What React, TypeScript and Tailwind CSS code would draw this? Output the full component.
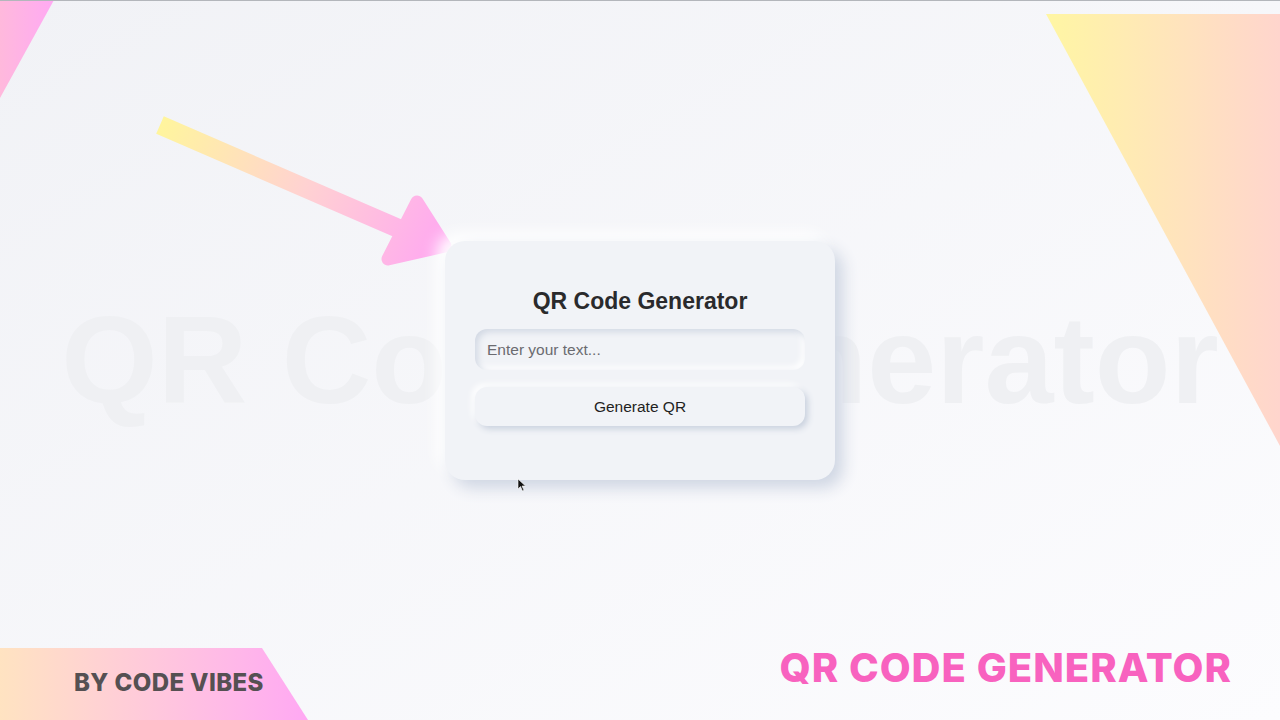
import { useState } from 'react'

// decorative arrow pointing at the card
function Arrow() {
  return (
    <svg width="330" height="180" viewBox="0 0 330 180" className="absolute left-[140px] top-[100px]">
      <defs>
        <linearGradient id="arrowGrad" gradientUnits="userSpaceOnUse" x1="20" y1="24" x2="312" y2="147">
          <stop offset="0" stopColor="#fff59d" />
          <stop offset="0.5" stopColor="#ffd2d2" />
          <stop offset="1" stopColor="#ffa6f2" />
        </linearGradient>
      </defs>
      <line x1="20" y1="24" x2="262" y2="129" stroke="url(#arrowGrad)" strokeWidth="19" />
      <polygon
        points="277,101 305,145 248,158"
        fill="url(#arrowGrad)"
        stroke="url(#arrowGrad)"
        strokeWidth="13"
        strokeLinejoin="round"
      />
    </svg>
  )
}

function Cursor() {
  return (
    <svg width="10" height="14" viewBox="0 0 10 14" className="absolute left-[517px] top-[477px]">
      <polygon points="1,1 1,11 3.5,8.5 5.5,13 7,12.3 5,8 8.5,8" fill="#111" stroke="#fff" strokeWidth="0.6" />
    </svg>
  )
}

export default function App() {
  const [text, setText] = useState('')

  return (
    <div
      className="relative h-[720px] w-[1280px] overflow-hidden border-t border-[#b3b6bb] bg-gradient-to-br from-[#f1f2f6] to-[#fcfcfe] flex flex-col"
      style={{ fontFamily: '"Liberation Sans", Arial, sans-serif' }}
    >
      {/* background decorations */}
      <div className="absolute left-0 top-[-1px] h-[98px] w-[54px] bg-gradient-to-r from-[#ffb9dc] to-[#ffa9f3] [clip-path:polygon(0_0,100%_0,0_100%)]" />
      <div className="absolute left-[1046px] top-[13px] h-[432px] w-[234px] bg-gradient-to-r from-[#fff6a3] to-[#ffd5cd] [clip-path:polygon(0_0,100%_0,100%_100%)]" />
      <div className="absolute inset-x-0 top-[297px] text-center text-[124px] font-bold leading-none text-[#eff0f3] whitespace-nowrap select-none">
        QR Code Generator
      </div>
      <Arrow />

      <div className="flex-1" />

      {/* card */}
      <div className="relative mx-auto w-[390px] h-[239px] rounded-[20px] bg-[#f1f3f7] px-[30px] pt-[46px] shadow-[8px_8px_16px_#cfd6e3,-8px_-8px_16px_#ffffff] flex flex-col">
        <h1 className="text-center text-[23px] font-bold leading-[28px] text-[#2a2a2c]">QR Code Generator</h1>
        <input
          value={text}
          onChange={e => setText(e.target.value)}
          placeholder="Enter your text..."
          className="mt-[14px] h-[41px] w-full rounded-[12px] bg-[#f1f3f7] px-[12px] text-[15.5px] text-[#333] placeholder:text-[#6b6b70] outline-none shadow-[inset_3px_3px_6px_#d3d9e4,inset_-3px_-3px_6px_#ffffff]"
        />
        <button className="mt-[17px] h-[39px] w-full rounded-[12px] bg-[#f1f3f7] text-[15.5px] text-[#1f1f22] shadow-[3px_3px_6px_#c9d1de,-3px_-3px_6px_#ffffff]">
          Generate QR
        </button>
      </div>

      <div className="flex-1 flex items-end justify-between">
        <div
          className="h-[72px] w-[308px] bg-gradient-to-r from-[#ffe3c1] via-[#ffc8dc] to-[#ffa8f3] [clip-path:polygon(0_0,262px_0,100%_100%,0_100%)] pl-[74px] pt-[23px]"
        >
          <span className="text-[24px] font-extrabold leading-none tracking-[0.4px] text-[#555052] whitespace-nowrap" style={{ fontFamily: 'Inter, sans-serif' }}>
            BY CODE VIBES
          </span>
        </div>
        <div
          className="mb-[32px] mr-[48px] text-[40px] font-extrabold leading-none tracking-[1px] text-[#f862bf] whitespace-nowrap"
          style={{ fontFamily: 'Inter, sans-serif' }}
        >
          QR CODE GENERATOR
        </div>
      </div>

      <Cursor />
    </div>
  )
}
